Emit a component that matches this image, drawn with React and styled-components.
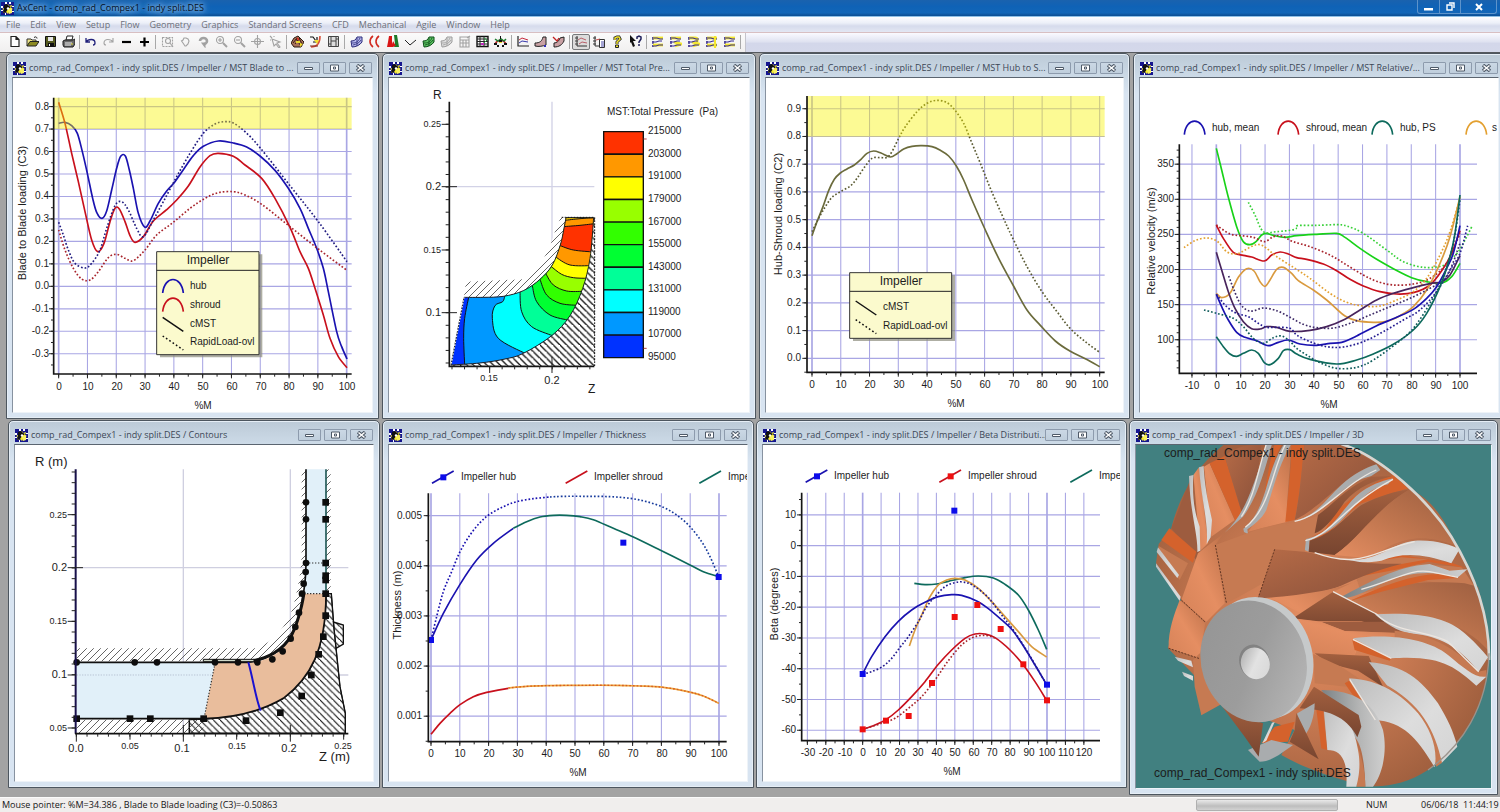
import React from "react";
import styled, { createGlobalStyle, css } from "styled-components";

const GlobalStyle = createGlobalStyle`
  * { box-sizing: border-box; }
  body { margin: 0; background: #a3a3a3; font-family: "Open Sans", "Noto Sans", sans-serif; font-size: 9px; }
  button { font: inherit; padding: 0; border: 0; background: none; color: inherit; }
`;

const Page = styled.div`
  display: flex;
  flex-direction: column;
  height: 100vh;
  min-height: 480px;
  overflow: hidden;
`;

/* ---------- application frame ---------- */

const AppTitle = styled.header`
  display: flex;
  align-items: center;
  flex: none;
  height: 17px;
  padding-left: 1px;
  gap: 3px;
  color: #04101f;
  background: linear-gradient(#1a62ae, #0f62b6 40%, #1266b8 80%, #0c4d92);
  border-bottom: 1px solid #8fc0e6;
`;
const AppName = styled.h1`
  flex: 1;
  margin: 0;
  font-size: 9px;
  line-height: 14px;
  font-weight: 400;
  white-space: nowrap;
  text-shadow: 0 0 4px #b4d4f2, 0 0 7px #9cc6ee, 0 0 10px #8bbcec;
`;
const AppButtons = styled.div`
  display: flex;
  align-self: flex-start;
  margin-right: 3px;
  border: 1px solid #5d93cb;
  border-top: 0;
  border-radius: 0 0 3px 3px;
`;
const AppButton = styled.button`
  display: grid;
  place-items: center;
  width: ${(p) => (p.$wide ? 36 : 21)}px;
  height: 13px;
  border-left: ${(p) => (p.$first ? "0" : "1px solid #5d93cb")};
`;

const MenuBar = styled.nav`
  display: flex;
  flex: none;
  align-items: center;
  gap: 10px;
  height: 16px;
  padding-left: 6px;
  color: #6c6f79;
  background: linear-gradient(#fdfdff, #eceff8 40%, #d6dbec 60%, #e3e7f3);
  border-bottom: 1px solid #d8bfc2;
`;
const MenuItem = styled.button`
  font-size: 9px;
  line-height: 14px;
  white-space: nowrap;
`;

const ToolRow = styled.div`
  display: flex;
  flex: none;
  height: 19px;
  background: linear-gradient(#fafaff, #e0e3f1 45%, #d3d7ea 55%, #d4d8ea);
`;
const Toolbar = styled.div`
  display: flex;
  align-items: center;
  padding: 0 3px 2px 5px;
  background: linear-gradient(#fbfbfb, #f0efef);
  border-right: 1px solid #c4c4cc;
`;
const Tool = styled.button`
  display: grid;
  place-items: center;
  width: 18px;
  height: 16px;
  ${(p) =>
    p.$pressed &&
    css`
      border: 1px solid #77797c;
      border-radius: 2px;
      background: #dcdcdc;
    `}
`;
const ToolGap = styled.span`
  width: ${(p) => (p.$wide ? 5 : 4)}px;
  height: 14px;
  background: linear-gradient(#a8a8a8, #a8a8a8) center / 1px 100% no-repeat;
`;

/* ---------- desktop and child windows ---------- */

const Desktop = styled.main`
  display: grid;
  flex: 1;
  min-height: 0;
  grid-template-rows: minmax(0, 366fr) minmax(0, 375fr);
  gap: 1px;
  padding-bottom: 2px;
  overflow: hidden;
  background: #a3a3a3;
  border-top: 1px solid #55595e;
`;
const UpperRow = styled.div`
  display: grid;
  grid-template-columns: minmax(0, 373fr) minmax(0, 374fr) minmax(0, 371fr) minmax(0, 372fr);
  gap: 3px;
  padding-left: 6px;
  margin-right: -5px;
`;
const LowerRow = styled.div`
  display: grid;
  grid-template-columns: minmax(0, 372fr) minmax(0, 372fr) minmax(0, 371fr) minmax(0, 369fr);
  gap: 2px;
  padding: 0 2px 0 8px;
`;
const Frame = styled.section`
  display: flex;
  flex-direction: column;
  min-width: 0;
  padding: 0 5px 5px;
  margin-bottom: ${(p) => (p.$short ? 7 : 0)}px;
  border: 1px solid #4d565f;
  border-radius: 5px 5px 0 0;
  background: linear-gradient(#bccad7, #cddbe8 24px, #d8e4f1 40px);
  box-shadow: inset 0 0 0 1px #e6eef6;
`;
const TitleBar = styled.div`
  display: flex;
  align-items: center;
  flex: none;
  height: 23px;
  padding: 5px 1px 0 1px;
  gap: 3px;
`;
const WindowTitle = styled.h2`
  flex: 1;
  min-width: 0;
  margin: 0;
  font-size: 9px;
  line-height: 14px;
  font-weight: 400;
  white-space: nowrap;
  color: #3c4756;
`;
const WindowButtons = styled.div`
  display: flex;
  gap: 3px;
`;
const WindowButton = styled.button`
  display: grid;
  place-items: center;
  width: 23px;
  height: 12px;
  border: 1px solid #8d9bad;
  border-radius: 1px;
  background: linear-gradient(#cbd8e5, #bfcedc);
`;
const Client = styled.div`
  flex: 1;
  min-height: 0;
  border: 1px solid #8792a0;
  border-top-color: #5b6570;
  border-right-color: #eef3f8;
  border-bottom-color: #eef3f8;
  background: ${(p) => p.$fill || "#fff"};
`;
const Canvas = styled.svg`
  display: block;
  width: 100%;
  height: 100%;
  font-family: "Liberation Sans", Arial, sans-serif;
  font-size: 10px;
  fill: #1c1c1c;
`;

const StatusBar = styled.footer`
  display: flex;
  flex: none;
  align-items: center;
  height: 15px;
  padding: 0 3px 0 2px;
  color: #151515;
  background: #f0eeed;
  border-top: 1px solid #fafafa;
`;
const StatusText = styled.span`
  flex: 1;
  font-size: 9px;
  line-height: 14px;
  white-space: nowrap;
`;
const Progress = styled.div`
  width: 142px;
  height: 12px;
  margin-right: 28px;
  border: 1px solid #b0b0b0;
  border-radius: 2px;
  background: linear-gradient(#e9e9e9, #c9c9c9 45%, #bdbdbd 60%, #d2d2d2);
`;
const StatusCell = styled.span`
  width: ${(p) => p.$width}px;
  font-size: 9px;
  line-height: 14px;
  white-space: nowrap;
`;

/* ---------- icons ---------- */

const AppIcon = () => (
  <svg width="13" height="13" viewBox="0 0 13 13" aria-hidden="true">
    <path d="M0 0h13v13H0z" fill="#15158e" />
    <path d="M4 0h2v2H4zM8 0h2v2H8zM0 4h2v2H0zM0 8h2v1H0zM11 9h2v1h-2zM4 11h1v2H4zM11 4h2v1h-2z" fill="#fff" />
    <path d="M3 3l2 1 2-2 1 2 3-1-1 3 2 1-2 1 1 3-3-1-1 2-2-2-3 1 1-3-2-1 2-1z" fill="#f4ea2c" />
    <path d="M3 3l3-1 2 2 2 1-3 2-2 3-3 1 1-4z" fill="#111" />
    <circle cx="7" cy="6.5" r="1.2" fill="#fff" />
    <path d="M7 8l4-2v5l-3 1z" fill="#f8f060" />
  </svg>
);

const K = { fill: "none", stroke: "#222", strokeWidth: 1.2 };
const G = { fill: "none", stroke: "#a2a2a2", strokeWidth: 1.1 };
const Blade = ({ c, d }) => (
  <g>
    <path d="M1 6c3 0 5-1 6-4h5v5c-2 3-6 5-10 5z" fill={c} stroke={d} strokeWidth="1" />
    <path d="M2 8c4 0 6-1 8-5M3 10c4-1 6-2 8-5M7 3v8" fill="none" stroke={d} strokeWidth=".8" />
  </g>
);
const Screen = ({ n }) => (
  <g>
    <path d="M2 2v3M2 6v3M2 10v2" stroke="#3b2f8c" strokeWidth="1.4" />
    <path d={n === 2 ? "M2 3h6c3 0 3 3 1 4" : "M2 3h10"} fill="none" stroke="#f3e72e" strokeWidth="2.8" />
    <path d={n % 2 ? "M2 10h10" : "M5 7l7 2-6 2"} fill="none" stroke="#f3e72e" strokeWidth="2.8" />
    <path d="M1 3h5l3 1h3M1 7h4l3-1h3M1 11h4l3-1h4" fill="none" stroke="#392d92" strokeWidth="1.2" />
    {n === 3 && <path d="M10 1v12" stroke="#f3e72e" strokeWidth="2" />}
  </g>
);

const ICONS = {
  New: <path d="M3 1.5h5l3 3v7H3zM8 1.5v3h3" {...K} fill="#fff" />,
  Open: (
    <g>
      <path d="M1 11V4h4l1 1h4v2" fill="#efe68a" stroke="#333" />
      <path d="M1 11l3-4.500h9L10 11z" fill="#8c8a20" stroke="#222" />
      <path d="M8 2.500c2-1.500 3 0 3 1" fill="none" stroke="#222" />
    </g>
  ),
  Save: (
    <g>
      <path d="M1.500 1.500h10v10h-10z" fill="#555a20" stroke="#111" />
      <path d="M4 2h5v4H4z" fill="#e6e6e6" />
      <path d="M4 8h6v4H4z" fill="#111" />
      <path d="M5 9h1v2H5z" fill="#fff" />
    </g>
  ),
  Print: (
    <g>
      <path d="M4 5l1-4h6l-1 4z" fill="#fff" stroke="#222" />
      <path d="M1 6l2-1h8l2-1v5l-2 3H2l-1-2z" fill="#6a6a6a" stroke="#1c1c1c" />
      <path d="M3 8h7M3 10h6" stroke="#eee" />
      <path d="M9 9h2" stroke="#dfd93a" />
    </g>
  ),
  Undo: <path d="M2 3v4h4M2 7c2-3 9-4 9 1 0 1-1 2-2 2" fill="none" stroke="#20207a" strokeWidth="1.3" />,
  Redo: <path d="M11 3v4H7M11 7C9 4 2 3 2 8c0 1 1 2 2 2" {...G} />,
  Less: <path d="M2 7h9" stroke="#000" strokeWidth="2.200" />,
  More: <path d="M2 7h9M6.500 2.500v9" stroke="#000" strokeWidth="2.200" />,
  "Zoom window": (
    <g {...G}>
      <path d="M1.500 2.500h10v9h-10z" strokeDasharray="2 1" />
      <circle cx="7" cy="6" r="2.500" />
      <path d="M9 8l3 4" />
    </g>
  ),
  Pan: <path d="M4 8L2.500 6 4 5l1-2h2l2 1 1 2-1 3-2 2H6z" {...G} />,
  Rotate: (
    <g {...G}>
      <path d="M3 6c0-4 7-4 7 0 0 2-2 3-3 3" strokeWidth="2.600" />
      <path d="M5 8h3v4z" fill="#999" />
    </g>
  ),
  "Zoom in": (
    <g {...G}>
      <circle cx="5" cy="5" r="3.500" />
      <path d="M3 5h4M5 3v4" />
      <path d="M8 8l4 4" strokeWidth="2" />
    </g>
  ),
  "Zoom out": (
    <g {...G}>
      <circle cx="5" cy="5" r="3.500" />
      <path d="M3 5h4" />
      <path d="M8 8l4 4" strokeWidth="2" />
    </g>
  ),
  Center: (
    <g {...G}>
      <circle cx="6.500" cy="6.500" r="3" />
      <path d="M6.500 0v13M0 6.500h13" />
    </g>
  ),
  Pick: <path d="M3 4l8 3-3 1 3 4-1 1-3-4-2 2zM1 1l2 2M1 5h1M5 1v1" {...G} />,
  Impeller: (
    <g>
      <path d="M0 8l3-5 4-2 6 6-3 5H3z" fill="#a8705a" stroke="#2b1a10" />
      <path d="M2 8l4-5M4 9l5-6M5 4l5 7M8 3l3 6" stroke="#2b1a10" strokeWidth=".9" />
      <path d="M9 8l3 1-3 3z" fill="#f0dc30" />
      <path d="M5 6h4v2H5z" fill="#e6d62c" />
      <path d="M6 3l2 2" stroke="#d8281e" strokeWidth="1.500" />
    </g>
  ),
  "Flow path": (
    <g>
      <path d="M2 12c6 0 9-4 9-11" fill="none" stroke="#d8523c" strokeWidth="1.600" />
      <path d="M1 2l3 0 3 4M8 2v5H4" fill="none" stroke="#111" strokeWidth="1.200" />
      <path d="M5 5l5 0-2 4z" fill="#f2e12e" />
      <path d="M1 11h8" stroke="#7c2a20" />
    </g>
  ),
  Stations: (
    <g>
      <path d="M1.500 1.500h10v10h-10z" fill="#ddd" stroke="#444" />
      <path d="M4 1v11M9 1v11M4 6h5M1 9h3M9 4h3" stroke="#444" />
    </g>
  ),
  Blade: <Blade c="#b4b6ec" d="#2a2a7a" />,
  Profiles: <path d="M5 1c-4 3-4 8 0 11M11 1c-4 3-4 8 0 11" fill="none" stroke="#d12a20" strokeWidth="1.600" />,
  Stress: (
    <g>
      <path d="M3 1h3v6l2 5H1l1-5z" fill="#d81414" />
      <path d="M8 0h3l2 12H8l1-3z" fill="#1c7a28" />
      <path d="M7 6l3 5H6z" fill="#d81414" />
    </g>
  ),
  Check: <path d="M1 5l5 5 6-5" fill="none" stroke="#222" />,
  "Solid blade": <Blade c="#5cc262" d="#0c4d18" />,
  "Solid blade disabled": <Blade c="#ddd" d="#9c9c9c" />,
  Calculator: (
    <g {...G}>
      <path d="M2 2h9v10H2zM2 5h9M5 5v7M8 5v7M2 8h9" />
      <path d="M9 3l3-2" />
    </g>
  ),
  Table: (
    <g>
      <path d="M1 1.500h11v10H1z" fill="#fff" stroke="#111" strokeWidth="1.400" />
      <path d="M1 4h11M1 6.500h11M1 9h11M4 1v11M8 1v11" stroke="#222" />
      <path d="M8 3l3 2-3 3" fill="none" stroke="#26a040" />
      <path d="M5 9h3" stroke="#c22cc0" strokeWidth="2" />
    </g>
  ),
  Points: (
    <g>
      <path d="M1 9c3-5 8-5 11 0" fill="none" stroke="#b52424" strokeWidth="1.600" />
      <path d="M1 4l3 2 3-2 3 2 2-2" fill="none" stroke="#1f7c30" strokeWidth="1.500" />
      <path d="M0 8h3v2H0zM5 5h3v3H5zM10 8h3v2h-3zM6 1h1v3H6zM3 10h2v2H3zM8 10h2v2H8z" fill="#111" />
      <path d="M5 7h3v1H5z" fill="#f0dc30" />
    </g>
  ),
  Curves: (
    <g>
      <path d="M2 1v10h11" {...K} />
      <path d="M3 5l3-2 6 2" fill="none" stroke="#c62b3f" />
      <path d="M3 8l3-2 6 1" fill="none" stroke="#3a3aac" />
    </g>
  ),
  Meridional: (
    <g>
      <path d="M1 8c5 0 7-2 8-6h3v8c-3 1-7 2-11 1z" fill="#c9a1a4" stroke="#222" />
      <path d="M10 10h2v2h-2z" fill="#332cb8" />
    </g>
  ),
  "Meridional colours": (
    <g>
      <path d="M2 8c3 0 5-2 6-5l4-1v4c-2 4-5 6-10 6z" fill="#c9a1a4" stroke="#222" />
      <path d="M1 2l4 4 2-3" fill="none" stroke="#c22020" strokeWidth="1.300" />
    </g>
  ),
  Plot: (
    <g>
      <path d="M2 1v10h10" fill="none" stroke="#333" />
      <path d="M3 5l3-2 5 2M4 9l3-2 5 1" fill="none" stroke="#b9606a" />
      <path d="M0 3h3M0 6h3M0 9h3" stroke="#444" />
    </g>
  ),
  "Copy plot": (
    <g>
      <path d="M2 1v10h5M0 3h3M0 6h3M0 9h3" fill="none" stroke="#333" />
      <path d="M3 5l4-1" stroke="#c44" />
      <path d="M6.500 4.500h5v8h-5z" fill="#fff" stroke="#333" />
      <path d="M8 7h3M8 9h3M8 11h3" stroke="#4a4aa8" />
    </g>
  ),
  Help: (
    <g>
      <path d="M4 5V3l2-1h2l1 2-3 3v2" fill="none" stroke="#222" strokeWidth="3" />
      <path d="M4 5V3l2-1h2l1 2-3 3v2" fill="none" stroke="#efe22b" strokeWidth="1.500" />
      <path d="M4.500 10h3v2.500h-3z" fill="#efe22b" stroke="#222" />
    </g>
  ),
  "Context help": (
    <g>
      <path d="M1 0l6 6H4l2 5-2 1-2-5-1 1z" fill="#111" />
      <path d="M8 4V2l2-1 2 1v2l-2 3v1M10 9v2" fill="none" stroke="#20205c" strokeWidth="1.500" />
    </g>
  ),
  "Screen 1": <Screen n={1} />,
  "Screen 2": <Screen n={0} />,
  "Screen 3": <Screen n={2} />,
  "Screen 4": <Screen n={3} />,
  "Screen 5": <Screen n={5} />,
};

const TOOL_GROUPS = [
  { names: ["New", "Open", "Save", "Print"] },
  { names: ["Undo", "Redo", "Less", "More"], wide: true },
  { names: ["Zoom window", "Pan", "Rotate", "Zoom in", "Zoom out", "Center", "Pick"] },
  { names: ["Impeller", "Flow path", "Stations"], wide: true },
  {
    names: ["Blade", "Profiles", "Stress", "Check", "Solid blade", "Solid blade disabled", "Calculator", "Table", "Points"],
  },
  { names: ["Curves", "Meridional", "Meridional colours"], wide: true },
  { names: ["Plot", "Copy plot", "Help", "Context help"] },
  { names: ["Screen 1", "Screen 2", "Screen 3", "Screen 4", "Screen 5"] },
];

const MENUS = [
  "File", "Edit", "View", "Setup", "Flow", "Geometry", "Graphics",
  "Standard Screens", "CFD", "Mechanical", "Agile", "Window", "Help",
];

/* ---------- plotting helpers: data is digitised at three units per pixel ---------- */

const spline = (p) => {
  let d = `M${p[0]} ${p[1]}`;
  const n = p.length / 2;
  const at = (i) => {
    const k = Math.max(0, Math.min(n - 1, i));
    return [p[2 * k], p[2 * k + 1]];
  };
  for (let i = 0; i < n - 1; i++) {
    const [a, b, c, e] = [at(i - 1), at(i), at(i + 1), at(i + 2)];
    d += `C${b[0] + (c[0] - a[0]) / 6} ${b[1] + (c[1] - a[1]) / 6} ${c[0] - (e[0] - b[0]) / 6} ${c[1] - (e[1] - b[1]) / 6} ${c[0]} ${c[1]}`;
  }
  return d;
};
const nums = (s) => s.trim().split(/[\s,]+/).map(Number);

const NAVY = "#1a12b0";
const RED = "#c8101c";
const TEAL = "#0d6a5c";
const GOLD = "#e3a030";
const GRID = "#a9a6e4";

const Fine = ({ origin, children }) => (
  <g transform={`translate(${origin[0]} ${origin[1]}) scale(0.33333)`}>{children}</g>
);
const Line = ({ c, d, dotted, w = 5 }) => (
  <path d={spline(nums(d))} fill="none" stroke={c} strokeWidth={w} strokeDasharray={dotted ? "5 6" : undefined} />
);

function Label({ origin, x, y, anchor = "start", size = 10, children, rotate }) {
  const px = Math.round(origin[0] + x / 3);
  const py = Math.round(origin[1] + y / 3);
  return (
    <text
      x={px}
      y={py}
      textAnchor={anchor}
      fontSize={size}
      transform={rotate ? `rotate(-90 ${px} ${py})` : undefined}
      xmlSpace="preserve"
    >
      {children}
    </text>
  );
}

function range(a, b, step) {
  const out = [];
  for (let v = a; v <= b + step / 1000; v += step) out.push(v);
  return out;
}

function Axes({ origin, box, x, y, xLabel, yLabel, band, heavy = [], children }) {
  const [l, t, r, b] = box;
  const X = (v) => x.zero + v * x.unit;
  const Y = (v) => y.zero - v * y.unit;
  const xs = range(x.from, x.to, x.step);
  const ys = range(y.from, y.to, y.step);
  const xm = range(x.from, x.to, x.step / 2);
  const ym = range(y.from - y.step, y.to + y.step, y.minor || y.step / 2);
  return (
    <>
      <Fine origin={origin}>
        <g stroke={GRID} strokeWidth="3.500" fill="none">
          {xs.map((v) => <path key={"x" + v} d={`M${X(v)} ${t}V${b}`} strokeWidth={heavy.includes(v) ? 5 : 3.2} />)}
          {ys.map((v) => <path key={"y" + v} d={`M${l} ${Y(v)}H${r}`} />)}
        </g>
        {children}
        {band && <path d={`M${l} ${t}H${r}V${band}H${l}z`} fill="#f8f200" fillOpacity=".42" />}
        <path d={`M${l} ${t}V${b}H${r}`} fill="none" stroke="#151515" strokeWidth="5" />
        <g stroke="#222" strokeWidth="3">
          {xm.map((v) => <path key={v} d={`M${X(v)} ${b}v8`} />)}
          {xs.map((v) => <path key={v} d={`M${X(v)} ${b}v13`} />)}
          {ym.filter((v) => Y(v) > t && Y(v) < b).map((v) => <path key={v} d={`M${l} ${Y(v)}h-8`} />)}
          {ys.map((v) => <path key={v} d={`M${l} ${Y(v)}h-14`} />)}
        </g>
      </Fine>
      {xs.map((v) => (
        <Label key={v} origin={origin} x={X(v) + 1} y={x.base} anchor="middle">{Math.round(v)}</Label>
      ))}
      {ys.map((v) => (
        <Label key={v} origin={origin} x={y.base} y={Y(v) + 9} anchor="end">
          {Math.abs(v) < 1e-6 ? (0).toFixed(y.digits) : v.toFixed(y.digits)}
        </Label>
      ))}
      <Label origin={origin} x={xLabel[0]} y={xLabel[1]} anchor="middle">%M</Label>
      <Label origin={origin} x={yLabel[1]} y={yLabel[2]} anchor="middle" size={11} rotate>{yLabel[0]}</Label>
    </>
  );
}

function LegendBox({ origin, x, y, w, h, rows }) {
  return (
    <>
      <Fine origin={origin}>
        <path d={`M${x + 10} ${y + 8}h${w}v${h}h${-w}z`} fill="#8c8c7c" opacity=".7" />
        <path d={`M${x} ${y}h${w}v${h}h${-w}z`} fill="#fbfacd" stroke="#333" strokeWidth="3" />
        <path d={`M${x} ${y + 56}h${w}`} stroke="#222" strokeWidth="3" />
        {rows.map((r, i) => {
          const cy = y + 104 + i * 56;
          return r.arc ? (
            <path key={r.text} d={`M${x + 18} ${cy + 20}C${x + 24} ${cy - 34} ${x + 74} ${cy - 34} ${x + 80} ${cy + 20}`} fill="none" stroke={r.arc} strokeWidth="5" />
          ) : (
            <path key={r.text} d={`M${x + 18} ${cy - 19}l62 42`} stroke="#111" strokeWidth="4.500" strokeDasharray={r.dotted ? "5 7" : undefined} />
          );
        })}
      </Fine>
      <Label origin={origin} x={x + w / 2} y={y + 38} anchor="middle" size={12}>Impeller</Label>
      {rows.map((r, i) => (
        <Label key={r.text} origin={origin} x={x + 101} y={y + 113 + i * 56}>{r.text}</Label>
      ))}
    </>
  );
}

/* ---------- the eight views ---------- */

function BladeLoading() {
  const o = [0, 85];
  return (
    <Canvas viewBox="13 78 359 334" preserveAspectRatio="xMinYMin meet" role="img" aria-label="Blade to blade loading">
      <Axes
        origin={o}
        box={[161, 38, 1055, 867]}
        x={{ from: 0, to: 100, step: 10, zero: 176, unit: 8.64, base: 915 }}
        y={{ from: -0.3, to: 0.8, step: 0.1, zero: 604, unit: 674, base: 147, digits: 1 }}
        xLabel={[608, 971]}
        yLabel={["Blade to Blade loading (C3)", 79, 385]}
        band={132}
        heavy={[0, 100]}
      >
        <Line c={NAVY} d="176 115 195 112 215 122 232 145 247 200 262 265 278 340 290 382 306 400 320 378 335 315 350 250 362 214 376 213 388 255 400 310 415 385 434 426 450 408 475 355 500 318 525 290 550 254 580 212 610 184 655 168 700 174 740 186 780 213 825 256 865 310 900 370 925 430 950 490 970 550 985 620 1010 740 1025 785 1041 822" />
        <Line c={RED} d="176 52 195 115 215 205 235 290 255 380 275 465 293 500 312 475 330 410 345 370 358 372 375 410 390 452 405 472 430 455 460 408 500 374 530 345 565 303 600 246 630 212 655 205 700 214 735 240 785 280 825 340 870 427 900 500 925 550 945 610 970 690 990 760 1015 815 1041 848" />
        <Line dotted c="#211c80" d="176 412 190 450 205 495 225 535 255 549 275 535 300 495 320 430 345 362 365 350 385 375 410 430 430 455 460 405 490 350 530 275 570 205 610 145 645 117 675 110 700 114 735 140 780 188 870 302 955 410 1041 530" />
        <Line dotted c="#a8242c" d="176 435 195 495 220 550 245 582 270 585 295 560 325 518 350 508 375 520 400 527 435 495 470 450 520 412 570 370 615 340 655 323 700 320 735 330 785 358 870 425 955 492 1041 556" />
      </Axes>
      <LegendBox
        origin={o} x={470} y={500} w={307} h={309}
        rows={[{ text: "hub", arc: NAVY }, { text: "shroud", arc: RED }, { text: "cMST" }, { text: "RapidLoad-ovl", dotted: true }]}
      />
    </Canvas>
  );
}

const SCALE = [
  ["215000", "#ff3200"], ["203000", "#ff9800"], ["191000", "#ffff00"], ["179000", "#98ff00"], ["167000", "#32ff00"],
  ["155000", "#00ff32"], ["143000", "#00ff98"], ["131000", "#00ffff"], ["119000", "#0098ff"], ["107000", "#0032ff"], ["95000", null],
];
const BANDS = [
  ["#0098ff", "266 637 254 700 251 760 254 840"],
  ["#00ffff", "374 634 368 650 345 662 337 700 355 760 437 806"],
  ["#00ff98", "420 620 425 680 455 725 517 752"],
  ["#00ff32", "457 602 470 650 510 690 567 706"],
  ["#32ff00", "480 583 500 630 540 655 590 661"],
  ["#98ff00", "498 567 520 600 560 618 608 619"],
  ["#ffff00", "513 544 545 568 580 578 622 580"],
  ["#ff9800", "527 516 570 540 634 542"],
  ["#ff3200", "538 481 580 495 640 501"],
  ["#ff9800", "550 425 600 421 644 416"],
  ["#ffd000", "554 406 600 401 644 398"],
];

function TotalPressure() {
  const o = [380, 85];
  const shroud = "252 637 310 637 370 634 430 617 480 583 517 540 541 480 552 430 558 398";
  const hubUp = "213 840 300 834 375 822 430 805 515 752 570 692 608 610 630 520 641 398";
  const hubDown = nums(hubUp);
  const back = [];
  for (let i = hubDown.length - 2; i >= 0; i -= 2) back.push(hubDown[i], hubDown[i + 1]);
  const passage = spline(nums(shroud)) + "L" + spline(back).slice(1) + "z";
  return (
    <Canvas viewBox="389 78 360 334" preserveAspectRatio="xMinYMin meet" role="img" aria-label="Total pressure contours">
      <defs>
        <pattern id="rise" width="21" height="21" patternUnits="userSpaceOnUse">
          <path d="M-2 23L23 -2" stroke="#444" strokeWidth="2.500" />
        </pattern>
        <pattern id="fall" width="20" height="20" patternUnits="userSpaceOnUse">
          <path d="M-2 -2L22 22M-12 8L8 28M12 -12L32 8" stroke="#111" strokeWidth="4" />
        </pattern>
        <clipPath id="passage"><path d={passage} /></clipPath>
      </defs>
      <Fine origin={o}>
        <path d="M516 50V843M210 305H643" stroke="#d2d2e6" strokeWidth="4" />
        <path d={spline(nums(shroud)) + "L542 397L525 440L508 490L480 540L430 583L258 590z"} fill="#fff" />
        <path d={spline(nums(shroud)) + "L542 397L525 440L508 490L480 540L430 583L258 590z"} fill="url(#rise)" />
        <path d={spline(hubDown) + "L645 398V843H213z"} fill="#fff" />
        <path d={spline(hubDown) + "L645 398V843H213z"} fill="url(#fall)" />
        <path d={passage} fill="#0032ff" />
        <g clipPath="url(#passage)" stroke="#111" strokeWidth="3">
          {BANDS.map(([c, d]) => {
            const p = nums(d);
            return <path key={d} d={spline(p) + `L${p[p.length - 2]} 880H720V370H${p[0]}z`} fill={c} />;
          })}
        </g>
        <path d={passage} fill="none" stroke="#222" strokeWidth="3" />
        <path d="M252 637L213 840" stroke="#fff" strokeWidth="4" strokeDasharray="4 5" />
        <path d="M545 397h99v446" fill="none" stroke="#111" strokeWidth="3" strokeDasharray="5 4" />
        <path d="M208 50V844H643" fill="none" stroke="#151515" strokeWidth="5" />
        <g stroke="#222" strokeWidth="3">
          {range(0, 20, 1).map((i) => <path key={i} d={`M208 ${834 - i * 37.7}h-11`} />)}
          {range(0, 11, 1).map((i) => <path key={i} d={`M${216 + i * 37.600} 844v9`} />)}
          <path d="M185 118h23M185 305h46M185 495h23M185 683h46M329 844v20M516 815v49" />
        </g>
        {SCALE.map(([v, c], i) => c && (
          <path key={v} d={`M671 ${140 + i * 67.800}h119v67.800h-119z`} fill={c} stroke="#111" strokeWidth="4" />
        ))}
        <path d="M791 162h9M791 790h9" stroke="#b44" strokeWidth="3" />
      </Fine>
      <Label origin={o} x={159} y={42} size={12}>R</Label>
      <Label origin={o} x={625} y={924} size={12}>Z</Label>
      {[["0.25", 127, 9], ["0.2", 314, 11], ["0.15", 504, 9], ["0.1", 692, 11]].map(([v, y, s]) => (
        <Label key={v} origin={o} x={183} y={y} anchor="end" size={s}>{v}</Label>
      ))}
      <Label origin={o} x={328} y={889} anchor="middle" size={9}>0.15</Label>
      <Label origin={o} x={516} y={897} anchor="middle" size={11}>0.2</Label>
      <Label origin={o} x={680} y={89}>{"MST:Total Pressure  (Pa)"}</Label>
      {SCALE.map(([v], i) => <Label key={v} origin={o} x={805} y={148 + i * 67.700}>{v}</Label>)}
    </Canvas>
  );
}

function HubShroud() {
  const o = [757, 50];
  return (
    <Canvas viewBox="766 78 357 334" preserveAspectRatio="xMinYMin meet" role="img" aria-label="Hub to shroud loading">
      <Axes
        origin={o}
        box={[150, 138, 1043, 967]}
        x={{ from: 0, to: 100, step: 10, zero: 165, unit: 8.63, base: 1013 }}
        y={{ from: 0, to: 0.9, step: 0.1, zero: 925, unit: 832, base: 131, digits: 1 }}
        xLabel={[597, 1071]}
        yLabel={["Hub-Shroud loading (C2)", 75, 492]}
        band={260}
        heavy={[0]}
      >
        <Line c="#6b6b3c" d="165 557 180 515 198 470 215 422 232 388 250 369 270 357 292 345 312 328 330 310 350 303 372 309 400 321 420 311 440 297 465 289 495 287 525 290 550 301 575 318 598 348 620 390 645 450 685 540 725 625 768 705 810 780 850 826 895 873 940 904 985 926 1028 950" />
        <Line dotted c="#5a5a32" d="165 545 185 505 205 470 225 442 250 425 280 408 300 385 320 355 345 325 370 323 390 322 405 305 425 265 445 230 480 185 510 160 540 151 570 158 595 182 620 220 645 280 670 340 700 415 735 495 765 560 810 650 855 725 900 785 940 836 985 875 1028 907" />
      </Axes>
      <LegendBox origin={o} x={278} y={668} w={306} h={197} rows={[{ text: "cMST" }, { text: "RapidLoad-ovl", dotted: true }]} />
    </Canvas>
  );
}

function RelativeVelocity() {
  const o = [1130, 110];
  return (
    <Canvas viewBox="1140 78 358 334" preserveAspectRatio="xMinYMin meet" role="img" aria-label="Relative velocity">
      <Fine origin={o}>
        {[[163, NAVY], [444, RED], [726, TEAL], [1008, GOLD]].map(([x, c]) => (
          <path key={x} d={`M${x} 74C${x + 5} 20 ${x + 56} 20 ${x + 62} 74`} fill="none" stroke={c} strokeWidth="5" />
        ))}
      </Fine>
      <Label origin={o} x={245} y={63}>hub, mean</Label>
      <Label origin={o} x={527} y={63}>shroud, mean</Label>
      <Label origin={o} x={809} y={63}>hub, PS</Label>
      <Label origin={o} x={1087} y={63}>s</Label>
      <Axes
        origin={o}
        box={[148, 103, 1041, 790]}
        x={{ from: -10, to: 100, step: 10, zero: 259, unit: 7.31, base: 837 }}
        y={{ from: 100, to: 350, step: 50, minor: 10, zero: 900, unit: 2.107, base: 133, digits: 0 }}
        xLabel={[597, 893]}
        yLabel={["Relative velocity (m/s)", 75, 392]}
        heavy={[0, 100]}
      >
        <Line c="#18d218" d="259 115 275 180 295 262 320 350 340 395 360 404 378 395 395 375 410 370 430 376 465 382 500 377 560 373 620 370 645 382 690 415 740 448 790 476 845 503 890 515 935 519 965 500 990 460" />
        <Line dotted c="#38d038" d="355 277 375 315 400 365 440 365 495 358 502 347 560 346 620 344 650 348 700 370 770 420 820 455 880 472 935 468 960 450 985 425 1005 390 1027 347" />
        <Line c={RED} d="259 345 280 385 310 427 340 436 365 441 403 453 425 435 450 426 475 432 500 443 530 448 580 462 620 482 660 508 700 528 750 545 800 552 850 548 900 525 940 475 965 430 990 362" />
        <Line dotted c="#a8242c" d="259 345 300 372 335 377 370 382 403 395 430 380 455 378 490 395 540 410 600 435 650 465 700 495 740 514 790 525 850 522 900 505 950 460 990 370" />
        <Line c="#d99a3e" d="259 550 275 563 300 550 325 502 350 476 372 483 390 515 405 529 420 510 440 478 460 472 485 490 505 512 550 540 590 570 620 597 645 618 680 632 730 637 770 634 810 617 850 590 890 540 930 460 960 380 990 260" />
        <Line dotted c={GOLD} d="162 413 195 392 230 384 262 394 290 425 320 432 345 420 370 407 390 404 410 415 440 440 490 472 540 505 600 550 650 577 700 588 750 588 800 570 850 545 890 505 930 435 960 365 990 265" />
        <Line c="#48245c" d="259 427 275 480 295 545 315 595 340 635 365 656 390 657 410 650 440 652 480 664 540 661 590 650 640 630 690 600 740 570 790 550 850 533 900 521 935 515 960 495 990 437" />
        <Line dotted c="#3d2a66" d="296 498 310 535 330 580 350 600 370 603 400 594 440 602 480 622 520 643 560 653 610 654 660 640 720 615 780 590 840 565 900 535 950 500 990 400" />
        <Line c={NAVY} d="259 553 275 590 295 630 320 667 345 682 380 692 415 707 445 697 475 690 510 702 560 706 600 700 635 697 680 678 740 647 800 622 850 598 890 565 920 530 950 475 970 430 990 347" />
        <Line dotted c="#241c90" d="259 553 290 590 320 610 355 620 385 640 410 652 440 652 480 655 500 675 540 695 590 710 640 711 700 695 760 665 820 630 870 600 920 545 960 480 990 430 1013 347" />
        <Line c={TEAL} d="259 680 280 710 300 732 320 739 340 730 365 720 385 730 403 758 420 764 445 745 460 722 480 719 500 732 540 748 620 762 680 750 730 732 790 703 850 660 890 610 930 530 960 440 975 370 990 255" />
        <Line dotted c="#0f5c5c" d="222 600 260 610 310 625 340 650 370 685 400 700 430 683 455 678 480 694 500 715 530 735 570 758 620 775 680 772 730 750 800 700 850 655 900 580 940 500 970 400 990 270" />
      </Axes>
    </Canvas>
  );
}

const ROUND = "230 727 404 727 471 727 645 727 714 727 772 727 817 718 848 694 872 656 886 621 897 578 906 521 911 491 917 456 918 429 918 298 918 247";
const SQUARE = "230 896 390 896 451 896 611 896 738 902 841 878 905 828 934 765 956 703 970 650 977 587 977 521 977 480 977 467 977 429 977 298 977 247";
const pairs = (s) => {
  const n = nums(s);
  return n.filter((_, i) => i % 2 === 0).map((v, i) => [v, n[2 * i + 1]]);
};

function Contours() {
  const o = [0, 420];
  return (
    <Canvas viewBox="15 445 358 336" preserveAspectRatio="xMinYMin meet" role="img" aria-label="Flow path contours">
      <defs>
        <pattern id="riseWide" width="21" height="21" patternUnits="userSpaceOnUse">
          <path d="M-2 23L23 -2" stroke="#444" strokeWidth="2.500" />
        </pattern>
        <pattern id="fallWide" width="20" height="20" patternUnits="userSpaceOnUse">
          <path d="M-2 -2L22 22M-12 8L8 28M12 -12L32 8" stroke="#111" strokeWidth="3.500" />
        </pattern>
      </defs>
      <Fine origin={o}>
        <path d="M550 148V940M871 148V940M230 443H1045M230 765H1045" stroke="#cfcfe0" strokeWidth="4" />
        <path d="M230 685H770C820 665 860 620 880 560C895 500 904 450 905 400V148H918V430C914 560 890 640 840 695C800 720 770 724 740 724H230z" fill="url(#riseWide)" />
        <path d="M230 727H645L612 896H230zM918 148H978V521H912C916 480 918 440 918 400z" fill="#e1f0f9" />
        <path d="M230 765H640" stroke="#b9c4d4" strokeWidth="3" strokeDasharray="4 4" />
        <path d="M230 899H568V940H230z" fill="url(#riseWide)" />
        <path d="M978 148h14V521h-14z" fill="url(#riseWide)" />
        <path d="M612 897C720 893 790 870 850 835C930 775 978 690 978 521H994L1002 625L1020 800L1036 880V940H568V899z" fill="#fff" stroke="#111" strokeWidth="3" />
        <path d="M612 897C720 893 790 870 850 835C930 775 978 690 978 521H994L1002 625L1020 800L1036 880V940H568V899zM1000 606L1030 615V672L1008 685z" fill="url(#fallWide)" stroke="#111" strokeWidth="4" />
        <path d="M568 899h42v41h-42z" fill="url(#riseWide)" />
        <path d="M645 729H740C800 727 850 695 875 650C897 600 908 560 912 521H978C978 690 930 775 850 835C790 870 720 893 612 897z" fill="#e9bd9c" />
        <path d="M230 727H740C800 724 850 690 875 645C900 600 918 500 918 430V148" fill="none" stroke="#111" strokeWidth="5" />
        <path d="M740 724C800 720 850 690 875 645C897 600 910 540 912 515" fill="none" stroke="#111" strokeWidth="9" />
        <path d="M610 718h152v7H610z" fill="#cfd8c8" stroke="#111" strokeWidth="3" />
        <path d="M230 896H612C720 893 790 870 850 835C930 775 978 690 978 521" fill="none" stroke="#111" strokeWidth="5" />
        <path d="M978 148V521" stroke="#235a58" strokeWidth="5" />
        <path d="M645 730L612 896M912 521H978M918 429H978" fill="none" stroke="#333" strokeWidth="3.500" strokeDasharray="4 5" />
        <path d="M745 727C760 780 768 840 782 872" fill="none" stroke="#1a12d0" strokeWidth="6" />
        {pairs(ROUND).map(([x, y]) => <circle key={x + "," + y} cx={x} cy={y} r="10" fill="#0d0d0d" />)}
        {pairs(SQUARE).map(([x, y]) => <path key={x + "," + y} d={`M${x - 10} ${y - 10}h20v20h-20z`} fill="#0d0d0d" />)}
        <path d="M227 148V941" stroke="#17104a" strokeWidth="6" />
        <path d="M225 941H1045" stroke="#111" strokeWidth="5" />
        <g stroke="#222" strokeWidth="3">
          {range(0, 24, 1).map((i) => <path key={i} d={`M227 ${924 - i * 32}h-12`} />)}
          {range(0, 25, 1).map((i) => <path key={i} d={`M${229 + i * 32.100} 941v9`} />)}
          <path d="M203 284h24M203 443h46M203 604h24M203 765h24M203 924h24M229 941v24M390 941v18M550 915v50M710 941v18M871 915v50M1031 941v18" />
        </g>
      </Fine>
      <Label origin={o} x={106} y={138} size={13}>R (m)</Label>
      <Label origin={o} x={957} y={1022} size={13}>Z (m)</Label>
      {[["0.25", 293, 9], ["0.2", 452, 11], ["0.15", 613, 9], ["0.1", 774, 11], ["0.05", 933, 9]].map(([v, y, s]) => (
        <Label key={v} origin={o} x={201} y={y} anchor="end" size={s}>{v}</Label>
      ))}
      {[["0.0", 229, 11], ["0.05", 390, 9], ["0.1", 546, 11], ["0.15", 710, 9], ["0.2", 868, 11], ["0.25", 1029, 9]].map(([v, x, s]) => (
        <Label key={v} origin={o} x={x} y={s === 11 ? 996 : 988} anchor="middle" size={s}>{v}</Label>
      ))}
    </Canvas>
  );
}

const Marks = ({ at, c }) => pairs(at).map(([x, y]) => <path key={x + "," + y} d={`M${x - 9} ${y - 9}h18v18h-18z`} fill={c} />);

const LineKey = ({ origin, items }) => (
  <>
    <Fine origin={origin}>
      {items.map(([x, y, c, mark]) => (
        <g key={x}>
          <path d={`M${x} ${y}l65 -37`} stroke={c} strokeWidth="5" />
          {mark && <Marks at={`${x + 34} ${y - 18}`} c={mark} />}
        </g>
      ))}
    </Fine>
    {items.map(([x, y, , , text]) => <Label key={x} origin={origin} x={x + 86} y={y - 9}>{text}</Label>)}
  </>
);

function Thickness() {
  const o = [380, 420];
  return (
    <Canvas viewBox="389 445 358 336" preserveAspectRatio="xMinYMin meet" role="img" aria-label="Thickness">
      <LineKey
        origin={o}
        items={[[156, 190, NAVY, "#0c0cea", "Impeller hub"], [557, 190, RED, null, "Impeller shroud"], [958, 190, TEAL, null, "Impe"]]}
      />
      <Axes
        origin={o}
        box={[145, 220, 1040, 965]}
        x={{ from: 0, to: 100, step: 10, zero: 153, unit: 8.64, base: 1010 }}
        y={{ from: 0.001, to: 0.005, step: 0.001, zero: 1039, unit: 150400, base: 127, digits: 3 }}
        xLabel={[593, 1068]}
        yLabel={["Thickness (m)", 62, 555]}
        heavy={[0, 100]}
      >
        <Line dotted c={NAVY} d="153 660 170 590 190 515 215 455 240 395 270 345 300 308 330 282 370 260 410 245 460 236 510 231" />
        <Line dotted c="#163a9c" d="510 231 550 229 620 229 690 230 750 235 800 245 850 262 890 285 930 320 965 365 990 410 1016 470" />
        <Line c={NAVY} d="153 660 190 580 240 493 290 420 340 370 400 325" />
        <Line c={TEAL} d="400 325 440 305 480 291 520 286 560 286 600 290 640 299 700 325 760 351 840 390 930 435 970 455 1016 470" />
        <Line c={RED} d="153 943 180 910 210 880 240 854 280 830 320 817 385 805" />
        <Line c="#eca53c" d="385 804 440 799 500 797 600 796 700 796 780 798 850 802 920 814 970 828 1016 850" />
        <Line dotted c="#d85a24" d="385 804 440 799 500 797 600 796 700 796 780 798 850 802 920 814 970 828 1016 850" w={4} />
        <Marks at="153 660 730 368 1016 471" c="#0c0cea" />
      </Axes>
    </Canvas>
  );
}

function Beta() {
  const o = [755, 420];
  return (
    <Canvas viewBox="763 445 357 336" preserveAspectRatio="xMinYMin meet" role="img" aria-label="Beta distribution">
      <LineKey
        origin={o}
        items={[[152, 187, NAVY, "#0c0cea", "Impeller hub"], [553, 187, RED, "#ee1010", "Impeller shroud"], [946, 187, TEAL, null, "Impe"]]}
      />
      <Axes
        origin={o}
        box={[140, 218, 1035, 962]}
        x={{ from: -30, to: 120, step: 10, zero: 323, unit: 5.53, base: 1007 }}
        y={{ from: -60, to: 10, step: 10, zero: 377, unit: 9.23, base: 124, digits: 0 }}
        xLabel={[590, 1065]}
        yLabel={["Beta (degrees)", 70, 553]}
        heavy={[0, 100]}
      >
        <Line c={TEAL} d="478 490 510 494 545 492 580 484 630 473 670 468 715 474 750 493 790 525 820 570 850 630 875 688" />
        <Line c="#d99a3e" d="463 678 480 630 500 585 525 530 550 495 575 480 600 475 630 480 670 505 710 545 750 590 790 635 830 680 875 711" />
        <Line c={NAVY} d="323 762 350 710 390 650 430 604 470 570 510 547 550 530 590 524 620 526 665 543 700 566 740 600 770 628 800 670 840 735 875 794" />
        <Line dotted c="#241c90" d="323 762 350 755 385 738 410 715 435 682 460 650 490 605 515 560 540 530 570 500 600 488 625 486 655 497 700 533 740 585 780 637 820 700 875 794" />
        <Line c={RED} d="323 928 360 915 393 899 430 870 470 830 510 785 550 733 590 690 630 655 660 642 690 642 720 653 765 690 805 735 840 785 875 841" />
        <Line dotted c="#a8242c" d="323 928 380 910 420 895 460 865 500 830 540 780 580 722 620 675 655 652 690 646 720 654" />
        <Marks at="323 762 598 272 876 794" c="#0c0cea" />
        <Marks at="323 928 393 902 461 888 531 789 599 591 667 555 737 627 805 733 876 841" c="#ee1010" />
      </Axes>
    </Canvas>
  );
}

const SHAPES = [
  /* left and top passages */
  ["dark", "M130 325L190 170L220 390L205 420z"],
  ["lite", "M196 165L214 140L240 370L217 392z"],
  ["lite", "M228 140L245 130L320 300L250 350z"],
  ["vivid", "M245 130L290 108L342 280L322 303z"],
  ["darkV", "M290 108C310 90 340 75 400 72C395 150 375 230 342 280z"],
  ["lite", "M475 72H492C485 160 475 230 478 305L360 335C420 260 410 180 475 72z"],
  ["vivid", "M490 72H530C520 160 515 230 500 300L472 306C480 220 490 150 490 72z"],
  ["darkV", "M530 72H640L750 133C660 150 600 250 500 300C515 230 520 160 530 72z"],
  ["vivid", "M124 325L205 395L195 428L100 360z"],
  ["copper", "M92 378L180 430L155 480L95 400z"],
  ["white", "M90 382L153 465L148 474L86 396z"],
  ["white", "M84 430L158 530L155 543L84 440z"],
  ["white", "M183 168L196 165C192 230 200 280 215 320L217 392L208 396C210 340 186 280 183 168z"],
  ["white", "M213 142L227 138C230 210 246 270 252 300L248 352L236 372C242 310 220 240 213 142z"],
  ["grey", "M415 72H432C410 150 390 230 345 290L290 338C345 290 375 210 415 72z"],
  ["vivid", "M440 72H462C430 130 425 190 400 262C415 200 420 140 440 72z"],
  ["grey", "M468 72H490C455 130 440 190 415 270C400 300 375 315 358 328L360 342L348 336L346 326L352 322C420 260 410 160 468 72z"],
  /* upper right passages */
  ["vivid", "M560 300C640 280 690 200 795 165L840 205L700 250C640 290 590 370 545 362z"],
  ["copper", "M400 330C520 300 600 290 640 250L590 330L535 360L470 345z"],
  ["deep", "M570 285C620 250 650 205 730 170L795 168C740 180 690 200 650 245C620 290 590 330 560 340z"],
  ["grey", "M480 304C560 300 590 240 640 195C680 160 710 145 745 133L757 150L730 168C660 185 620 235 580 268C550 292 520 302 480 304z"],
  ["grey", "M530 358C620 340 640 260 700 215C740 188 775 180 795 175L780 193C720 205 690 250 650 290C610 335 570 350 545 362L542 395L530 390z"],
  ["deep", "M545 362C620 340 650 290 700 255C760 225 800 215 845 208C740 270 700 350 620 405L542 396z"],
  ["far", "M845 208C900 230 950 290 985 378C900 345 850 350 790 375L720 415L620 405C700 350 740 270 845 208z"],
  ["copper", "M680 460L820 430L1000 440L1040 500L860 480L700 520z"],
  ["vivid", "M700 430L820 405L975 430L1015 445L900 425L800 450L690 470z"],
  ["copper", "M700 430L820 412L900 418L800 436z"],
  ["white", "M650 420C760 424 780 372 860 362C920 358 970 375 995 387L970 430C880 398 820 398 760 422C710 430 690 428 650 420z"],
  ["plateDim", "M640 530C720 490 800 440 905 432L965 452L1018 448L990 472C900 448 840 462 780 482C720 510 690 528 650 535z"],
  ["far", "M660 545C760 500 850 478 1010 490L1050 500L1075 600L1080 690C1000 600 880 575 740 580z"],
  ["vivid", "M660 545C760 500 850 462 940 462L990 474L900 480L760 515z"],
  /* cone and main blades */
  ["copper", "M262 375L400 325L470 310L535 350L530 395L440 388L405 490L330 532L295 550z"],
  ["lite", "M210 400L285 342L262 375L290 550L235 605L160 540z"],
  ["lite", "M155 540L232 607L215 715L122 685C120 630 140 580 155 540z"],
  ["darkV", "M440 388L530 395L690 425C760 435 820 430 820 432C740 450 680 480 620 505C540 530 440 535 390 535z"],
  ["lite", "M390 535C500 530 640 510 700 475L610 518L495 595L540 700L680 705L700 655L540 590L440 540z"],
  ["deep", "M495 595L615 515L745 582L800 630L700 604L570 604z"],
  ["dark", "M580 606L770 605L830 640L650 633z"],
  ["lite", "M500 597L580 606L650 633L830 640L900 670L690 655L680 705L555 700z"],
  ["white", "M740 583C880 575 960 595 1010 640C1050 675 1070 700 1080 712L1052 755C1000 690 950 655 870 643C820 638 790 625 740 583z"],
  ["copper", "M800 632C900 645 970 670 1050 755L1075 750V770L1040 775C970 700 910 675 800 650z"],
  ["white", "M675 655C780 640 900 655 960 705C1010 745 1040 775 1075 770L1045 797C980 740 940 705 790 715z"],
  ["vivid", "M673 660L790 715L785 722L680 690z"],
  /* lower blades */
  ["deep", "M560 700L722 708L765 800L690 752L600 730z"],
  ["copper", "M556 702L640 740L700 780L655 800L560 790z"],
  ["white", "M722 726C830 735 880 780 930 850C960 900 975 930 988 980L940 1030C920 930 870 860 780 800z"],
  ["copper", "M765 790C880 850 920 930 942 1028L925 1040C900 940 860 860 765 790z"],
  ["white", "M663 775C760 780 820 825 870 880C910 930 930 990 920 1042C870 960 830 905 740 900z"],
  ["vivid", "M650 790L663 782L742 905L730 905z"],
  ["plateDim", "M580 810C680 810 740 850 765 930C780 1000 760 1070 735 1100H712C710 1040 705 980 680 950z"],
  ["copper", "M640 890C690 950 712 1040 712 1100H685C690 1030 680 960 640 890z"],
  ["white", "M585 842C640 850 680 920 690 990C700 1040 690 1080 685 1100H655C660 1020 640 990 598 990z"],
  ["vivid", "M562 845L583 842L597 990L580 985z"],
  ["deep", "M558 800L692 885L700 920L688 952C660 900 620 870 515 865z"],
  ["grey", "M508 880L560 850C560 910 530 960 500 975z"],
  ["deep", "M505 878C530 930 555 980 572 1018L485 965L500 930z"],
  ["vivid", "M440 920L500 905L480 965L400 970z"],
  ["grey", "M360 990L430 960L495 975C460 1000 430 1025 395 1025z"],
  ["white", "M432 908L440 906L415 962L403 970z"],
  ["deep", "M275 850L320 880L405 910L392 1010L350 950z"],
  ["copper", "M215 700L195 720L200 800L220 886L285 850z"],
  ["white", "M140 710L190 722L195 742L150 722z"],
  ["white", "M162 755L195 768V782L168 768z"],
];
const FILLS = {
  dark: "#9d5c3f", deep: "url(#deep)", darkV: "url(#darkV)", copper: "#c67a52", lite: "url(#lite)", far: "url(#far)",
  vivid: "#d4622c", white: "url(#plate)", plateDim: "url(#plateDim)", grey: "#a9acae",
};

function Impeller3D() {
  const o = [1128, 420];
  return (
    <Canvas viewBox="1136 445 355 343" preserveAspectRatio="xMinYMin meet" role="img" aria-label="Impeller 3D view">
      <defs>
        <radialGradient id="disc" gradientUnits="userSpaceOnUse" cx="560" cy="600" r="560">
          <stop offset="0" stopColor="#e58f62" />
          <stop offset=".5" stopColor="#c97a52" />
          <stop offset="1" stopColor="#a1603f" />
        </radialGradient>
        <linearGradient id="lite" x1="0" y1="1" x2="1" y2="0">
          <stop offset="0" stopColor="#d58258" />
          <stop offset=".5" stopColor="#e58e62" />
          <stop offset="1" stopColor="#bb7049" />
        </linearGradient>
        <linearGradient id="far" x1="0" y1="1" x2="1" y2="0">
          <stop offset="0" stopColor="#e58e62" />
          <stop offset=".5" stopColor="#bf754e" />
          <stop offset="1" stopColor="#9c5e40" />
        </linearGradient>
        <linearGradient id="darkV" x1="0" y1="0" x2="1" y2="1">
          <stop offset="0" stopColor="#b66b47" />
          <stop offset="1" stopColor="#88503a" />
        </linearGradient>
        <linearGradient id="deep" x1="0" y1="0" x2="0" y2="1">
          <stop offset="0" stopColor="#a3603f" />
          <stop offset="1" stopColor="#774530" />
        </linearGradient>
        <linearGradient id="plate" x1="0" y1="0" x2="1" y2="1">
          <stop offset="0" stopColor="#bcbcbc" />
          <stop offset=".6" stopColor="#dddddd" />
          <stop offset="1" stopColor="#d4d4d4" />
        </linearGradient>
        <linearGradient id="plateDim" x1="0" y1="0" x2="1" y2="0">
          <stop offset="0" stopColor="#7c8284" />
          <stop offset=".6" stopColor="#b4b5b5" />
          <stop offset="1" stopColor="#cfcfcf" />
        </linearGradient>
        <linearGradient id="face" x1="0" y1="0" x2="1" y2="1">
          <stop offset="0" stopColor="#949494" />
          <stop offset=".5" stopColor="#9c9c9c" />
          <stop offset="1" stopColor="#bcbcbc" />
        </linearGradient>
        <linearGradient id="bore" x1="0" y1="0" x2="1" y2="1">
          <stop offset="0" stopColor="#a8a8a8" />
          <stop offset=".5" stopColor="#e2e2e2" />
          <stop offset="1" stopColor="#d6d6d6" />
        </linearGradient>
      </defs>
      <Fine origin={o}>
        <path d="M290 72H640C760 100 900 240 970 350C1050 480 1085 600 1083 700C1080 860 1000 980 900 1050C830 1095 760 1105 700 1095C600 1070 520 1040 460 1005L500 930L280 850L120 685L160 540L84 430L92 372L130 325C150 240 200 140 290 72z" fill="url(#disc)" />
        {SHAPES.map(([k, d]) => <path key={d} d={d} fill={FILLS[k]} />)}
        <path d="M640 72C760 110 900 240 970 350C1050 480 1085 600 1083 720" fill="none" stroke="#d6d6d2" strokeWidth="8" />
        <path d="M1083 700C1080 860 1000 980 900 1050" fill="none" stroke="#9a938c" strokeWidth="4" />
        <g fill="none" stroke="#ece6e0" strokeWidth="4">
          <path d="M415 72C390 150 380 230 340 290" />
          <path d="M473 72C430 150 430 260 352 322" />
          <path d="M500 304C580 290 650 190 745 150" />
          <path d="M532 362C620 340 640 260 795 178" />
          <path d="M560 398C700 450 740 390 860 365" />
          <path d="M615 515L745 582C800 640 900 630 960 665L1052 755" />
          <path d="M700 508C800 480 850 445 905 455L990 472" />
          <path d="M675 658L790 715M665 778L742 900" />
        </g>
        <path d="M262 375L295 548M160 540L232 607M122 685L215 716M440 388L390 535" fill="none" stroke="#5f3422" strokeWidth="3" strokeDasharray="6 4" />
        <ellipse cx="399" cy="714" rx="154" ry="186" transform="rotate(-18 399 714)" fill="#c6c9ca" />
        <ellipse cx="377" cy="724" rx="157" ry="185" transform="rotate(-18 377 724)" fill="url(#face)" />
        <ellipse cx="379" cy="725" rx="45" ry="52" transform="rotate(-18 379 725)" fill="#828282" />
        <ellipse cx="382" cy="730" rx="43" ry="48" transform="rotate(-18 382 730)" fill="url(#bore)" />
      </Fine>
      <Label origin={o} x={107} y={111} size={12}>comp_rad_Compex1 - indy split.DES</Label>
      <Label origin={o} x={77} y={1071} size={12}>comp_rad_Compex1 - indy split.DES</Label>
    </Canvas>
  );
}

function ChildWindow({ title, short, fill, children }) {
  return (
    <Frame $short={short} aria-label={title}>
      <TitleBar>
        <AppIcon />
        <WindowTitle>{title}</WindowTitle>
        <WindowButtons>
          <WindowButton aria-label="Minimize">
            <svg width="9" height="6"><path d="M.5 2.500h8v2h-8z" fill="#fff" stroke="#4f5a68" /></svg>
          </WindowButton>
          <WindowButton aria-label="Maximize">
            <svg width="9" height="8"><path d="M.5 1h8v6h-8z" fill="#fff" stroke="#4f5a68" /><path d="M3.500 3h2v2h-2z" fill="#fff" stroke="#4f5a68" /></svg>
          </WindowButton>
          <WindowButton aria-label="Close">
            <svg width="9" height="8">
              <path d="M1 1l7 6M8 1L1 7" stroke="#4f5a68" strokeWidth="3.500" />
              <path d="M1.500 1.500l6 5M7.500 1.500l-6 5" stroke="#fff" strokeWidth="1.500" />
            </svg>
          </WindowButton>
        </WindowButtons>
      </TitleBar>
      <Client $fill={fill}>{children}</Client>
    </Frame>
  );
}

const DOC = "comp_rad_Compex1 - indy split.DES / ";

export default function App() {
  return (
    <Page>
      <GlobalStyle />
      <AppTitle>
        <AppIcon />
        <AppName>AxCent - comp_rad_Compex1 - indy split.DES</AppName>
        <AppButtons>
          <AppButton $first aria-label="Minimize">
            <svg width="9" height="8"><path d="M0 5h9v2.500H0z" fill="#fff" /></svg>
          </AppButton>
          <AppButton aria-label="Restore">
            <svg width="9" height="9"><path d="M3 1h5v5M1 3h5v5H1z" fill="none" stroke="#fff" strokeWidth="1.400" /></svg>
          </AppButton>
          <AppButton $wide aria-label="Close">
            <svg width="8" height="8"><path d="M1 1l6 6M7 1L1 7" stroke="#fff" strokeWidth="2" /></svg>
          </AppButton>
        </AppButtons>
      </AppTitle>
      <MenuBar>
        {MENUS.map((m) => <MenuItem key={m}>{m}</MenuItem>)}
      </MenuBar>
      <ToolRow>
        <Toolbar role="toolbar">
          {TOOL_GROUPS.map((g) => (
            <React.Fragment key={g.names[0]}>
              {g.names.map((n) => (
                <Tool key={n} aria-label={n} $pressed={n === "Plot"}>
                  <svg width="13" height="13" viewBox="0 0 13 13">{ICONS[n]}</svg>
                </Tool>
              ))}
              <ToolGap $wide={g.wide} />
            </React.Fragment>
          ))}
        </Toolbar>
      </ToolRow>
      <Desktop>
        <UpperRow>
          <ChildWindow title={DOC + "Impeller / MST Blade to ..."}><BladeLoading /></ChildWindow>
          <ChildWindow title={DOC + "Impeller / MST Total Pre..."}><TotalPressure /></ChildWindow>
          <ChildWindow title={DOC + "Impeller / MST Hub to S..."}><HubShroud /></ChildWindow>
          <ChildWindow title={DOC + "Impeller / MST Relative/..."}><RelativeVelocity /></ChildWindow>
        </UpperRow>
        <LowerRow>
          <ChildWindow short title={DOC + "Contours"}><Contours /></ChildWindow>
          <ChildWindow short title={DOC + "Impeller / Thickness"}><Thickness /></ChildWindow>
          <ChildWindow short title={DOC + "Impeller / Beta Distributi..."}><Beta /></ChildWindow>
          <ChildWindow title={DOC + "Impeller / 3D"} fill="#418080"><Impeller3D /></ChildWindow>
        </LowerRow>
      </Desktop>
      <StatusBar>
        <StatusText>Mouse pointer: %M=34.386 , Blade to Blade loading (C3)=-0.50863</StatusText>
        <Progress role="progressbar" aria-label="Progress" />
        <StatusCell $width={55}>NUM</StatusCell>
        <StatusCell $width={42}>06/06/18</StatusCell>
        <StatusCell $width={34}>11:44:19</StatusCell>
      </StatusBar>
    </Page>
  );
}
